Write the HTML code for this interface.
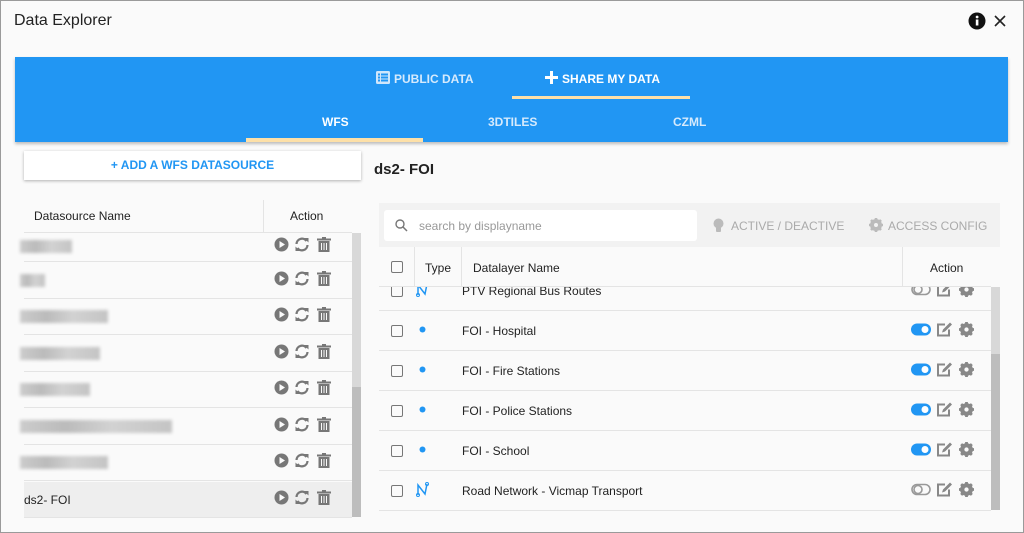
<!DOCTYPE html>
<html><head><style>
*{box-sizing:border-box;margin:0;padding:0}
body{width:1024px;height:533px;background:#fafafa;font-family:"Liberation Sans",sans-serif;position:relative;overflow:hidden;color:#222}
.frame{position:absolute;left:0;top:0;width:1024px;height:533px;border:1px solid #9a9a9a;pointer-events:none;z-index:9}
.abs{position:absolute}
.tab{color:#fff;font-size:12px;font-weight:bold;position:absolute}
.row{position:absolute;left:24px;width:328px;height:36px;border-bottom:1px solid #e4e4e4}
.ic{position:absolute;top:50%;transform:translateY(-50%)}
.rrow{position:absolute;left:379px;width:612px;height:40px;border-bottom:1px solid #e4e4e4;font-size:12px}
.cb{position:absolute;left:12px;top:14px;width:12px;height:12px;border:1.5px solid #777;border-radius:2px}
.blur{position:absolute;height:13px;background:linear-gradient(90deg,#ccc,#bbb 30%,#d2d2d2 60%,#c4c4c4);filter:blur(1.5px)}
</style></head><body>
<div class="frame"></div>
<div class="abs" style="left:14px;top:12px;font-size:16px">Data Explorer</div>
<svg class="abs" style="left:968px;top:12px" width="18" height="18"><circle cx="9" cy="9" r="8.5" fill="#111"/><rect x="7.8" y="7.5" width="2.6" height="6" fill="#fff"/><circle cx="9.1" cy="5" r="1.4" fill="#fff"/></svg>
<svg class="abs" style="left:994px;top:15px" width="12" height="12"><path d="M1 1L11 11M11 1L1 11" stroke="#222" stroke-width="1.6"/></svg>

<div class="abs" style="left:15px;top:57px;width:993px;height:85px;background:#2196f3;box-shadow:0 2px 3px rgba(0,0,0,.25)"></div>
<svg class="abs" style="left:376px;top:71px" width="14" height="13"><rect width="14" height="13" rx="1.5" fill="#cfe6fb"/><g fill="#2196f3"><rect x="2" y="2.5" width="2" height="2"/><rect x="5" y="2.5" width="7" height="2"/><rect x="2" y="5.5" width="2" height="2"/><rect x="5" y="5.5" width="7" height="2"/><rect x="2" y="8.5" width="2" height="2"/><rect x="5" y="8.5" width="7" height="2"/></g></svg>
<div class="tab" style="left:394px;top:72px;color:#d6eafc">PUBLIC DATA</div>
<svg class="abs" style="left:545px;top:71px" width="13" height="13"><path d="M6.5 0V13M0 6.5H13" stroke="#fff" stroke-width="3"/></svg>
<div class="tab" style="left:562px;top:72px">SHARE MY DATA</div>
<div class="abs" style="left:512px;top:96px;width:178px;height:3px;background:#fde0a8"></div>
<div class="tab" style="left:322px;top:115px">WFS</div>
<div class="tab" style="left:488px;top:115px;color:#d6eafc">3DTILES</div>
<div class="tab" style="left:673px;top:115px;color:#d6eafc">CZML</div>
<div class="abs" style="left:246px;top:138px;width:177px;height:4px;background:#fde0a8"></div>

<div class="abs" style="left:24px;top:151px;width:337px;height:29px;background:#fff;box-shadow:0 1px 3px rgba(0,0,0,.3);color:#2196f3;font-size:12px;font-weight:bold;text-align:center;line-height:29px">+ ADD A WFS DATASOURCE</div>

<div class="abs" style="left:24px;top:200px;width:328px;height:33px;border-bottom:1px solid #e4e4e4;font-size:12px">
<div class="abs" style="left:10px;top:9px">Datasource Name</div>
<div class="abs" style="left:239px;top:0;height:33px;border-left:1px solid #e4e4e4"></div>
<div class="abs" style="left:266px;top:9px">Action</div></div>
<div class="abs" style="left:352px;top:233px;width:9px;height:284px;background:#d8d8d8"></div>
<div class="abs" style="left:352px;top:387px;width:9px;height:130px;background:#bdbdbd"></div>

<div id="L"></div>

<div class="abs" style="left:374px;top:161px;font-size:15px;font-weight:bold">ds2- FOI</div>
<div class="abs" style="left:379px;top:203px;width:621px;height:44px;background:#f2f2f2"></div>
<div class="abs" style="left:384px;top:210px;width:313px;height:31px;background:#fff;border-radius:3px"></div>
<svg class="abs" style="left:395px;top:219px" width="13" height="13"><circle cx="5" cy="5" r="4" stroke="#777" stroke-width="1.4" fill="none"/><path d="M8 8L12 12" stroke="#777" stroke-width="1.5"/></svg>
<div class="abs" style="left:419px;top:219px;font-size:12px;color:#999">search by displayname</div>
<svg class="abs" style="left:713px;top:218px" width="11" height="15"><circle cx="5.5" cy="5.5" r="5" fill="#bbb"/><rect x="3" y="9" width="5" height="5" rx="1" fill="#bbb"/></svg>
<div class="abs" style="left:731px;top:219px;font-size:12px;color:#aaa">ACTIVE / DEACTIVE</div>
<svg class="abs" style="left:869px;top:218px" width="14" height="14" viewBox="0 0 14 14"><circle cx="7" cy="7" r="4.5" fill="none" stroke="#bbb" stroke-width="3"/><g stroke="#bbb" stroke-width="2.6"><path d="M7 0V14M0 7H14M2 2L12 12M12 2L2 12"/></g><circle cx="7" cy="7" r="2" fill="#f2f2f2"/></svg>
<div class="abs" style="left:888px;top:219px;font-size:12px;color:#aaa">ACCESS CONFIG</div>

<div class="abs" style="left:379px;top:247px;width:612px;height:40px;border-bottom:1px solid #e4e4e4;font-size:12px">
<div class="cb" style="top:14px"></div>
<div class="abs" style="left:35px;top:0;height:40px;border-left:1px solid #e4e4e4"></div>
<div class="abs" style="left:46px;top:14px">Type</div>
<div class="abs" style="left:82px;top:0;height:40px;border-left:1px solid #e4e4e4"></div>
<div class="abs" style="left:94px;top:14px">Datalayer Name</div>
<div class="abs" style="left:523px;top:0;height:40px;border-left:1px solid #e4e4e4"></div>
<div class="abs" style="left:551px;top:14px">Action</div></div>
<div class="abs" style="left:991px;top:287px;width:9px;height:223px;background:#d8d8d8"></div>
<div class="abs" style="left:991px;top:354px;width:9px;height:156px;background:#bdbdbd"></div>
<div id="R" style="position:absolute;left:0;top:287px;width:1024px;height:225px;overflow:hidden"></div>

<script>
var play='<svg width="15" height="15"><circle cx="7.5" cy="7.5" r="7" fill="#777"/><path d="M5.5 4L11 7.5L5.5 11Z" fill="#fafafa"/></svg>';
var ref='<svg width="16" height="15" viewBox="0 0 16 15"><path d="M2.5 7A5.5 5.5 0 0 1 12.5 4M13.5 8A5.5 5.5 0 0 1 3.5 11" stroke="#777" stroke-width="2.2" fill="none"/><path d="M10 1L14.5 1L14.5 5.5Z M6 14L1.5 14L1.5 9.5Z" fill="#777"/></svg>';
var trash='<svg width="14" height="15"><rect x="0" y="1.5" width="14" height="2" fill="#777"/><rect x="5" y="0" width="4" height="2" fill="#777"/><rect x="1.5" y="4" width="11" height="11" fill="#777"/><g fill="#fafafa"><rect x="4" y="6" width="1" height="7"/><rect x="6.5" y="6" width="1" height="7"/><rect x="9" y="6" width="1" height="7"/></g></svg>';
var L='',tops=[226,263,299,336,372,409,445,482],w=[52,25,88,80,70,152,88];
tops.forEach(function(t,i){var last=i==7;L+='<div class="row" style="top:'+t+'px;'+(last?'background:#eee;':'')+'">'+(last?'<div class="abs" style="left:0;top:11px;font-size:12px">ds2- FOI</div>':'<div class="blur" style="left:-4px;top:'+(i==0?7:11)+'px;width:'+w[i]+'px"></div>')+'<span class="ic" style="left:250px">'+play+'</span><span class="ic" style="left:270px">'+ref+'</span><span class="ic" style="left:293px">'+trash+'</span></div>';});
L=L.replace('top:226px;','top:233px;height:29px;');
document.getElementById('L').outerHTML=L;
var line='<svg width="15" height="15"><path d="M3 13V3L10 12L12 2" stroke="#2196f3" stroke-width="1.5" fill="none"/><circle cx="3" cy="13" r="1.5" fill="none" stroke="#2196f3"/><circle cx="12" cy="2" r="1.5" fill="none" stroke="#2196f3"/></svg>';
var dot='<svg width="15" height="15"><circle cx="7.5" cy="7.5" r="3" fill="#2196f3"/></svg>';
var on='<svg width="20" height="12"><rect width="20" height="12" rx="6" fill="#2196f3"/><circle cx="14" cy="6" r="3.5" fill="#fff"/></svg>';
var off='<svg width="20" height="12"><rect x="1" y="1" width="18" height="10" rx="5" fill="none" stroke="#999" stroke-width="1.6"/><circle cx="7" cy="6" r="4" fill="none" stroke="#999" stroke-width="1.6"/></svg>';
var edit='<svg width="17" height="16"><path d="M9 3H2V14H13V8" stroke="#888" stroke-width="2" fill="none"/><path d="M6 11L7 8L14 1L16 3L9 10Z" fill="#888"/></svg>';
var gear='<svg width="15" height="15" viewBox="0 0 14 14"><circle cx="7" cy="7" r="4.5" fill="none" stroke="#888" stroke-width="3"/><g stroke="#888" stroke-width="2.6"><path d="M7 0V14M0 7H14M2 2L12 12M12 2L2 12"/></g><circle cx="7" cy="7" r="2" fill="#fafafa"/></svg>';
var rows=[['PTV Regional Bus Routes',line,off],['FOI - Hospital',dot,on],['FOI - Fire Stations',dot,on],['FOI - Police Stations',dot,on],['FOI - School',dot,on],['Road Network - Vicmap Transport',line,off]];
var R='';rows.forEach(function(r,i){var t=-16+i*40;R+='<div class="rrow" style="top:'+t+'px"><div class="cb"></div><span class="ic" style="left:36px">'+r[1]+'</span><div class="abs" style="left:83px;top:13px">'+r[0]+'</div><span class="ic" style="left:532px">'+r[2]+'</span><span class="ic" style="left:557px">'+edit+'</span><span class="ic" style="left:580px">'+gear+'</span></div>';});
document.getElementById('R').innerHTML=R;
</script>
</body></html>
